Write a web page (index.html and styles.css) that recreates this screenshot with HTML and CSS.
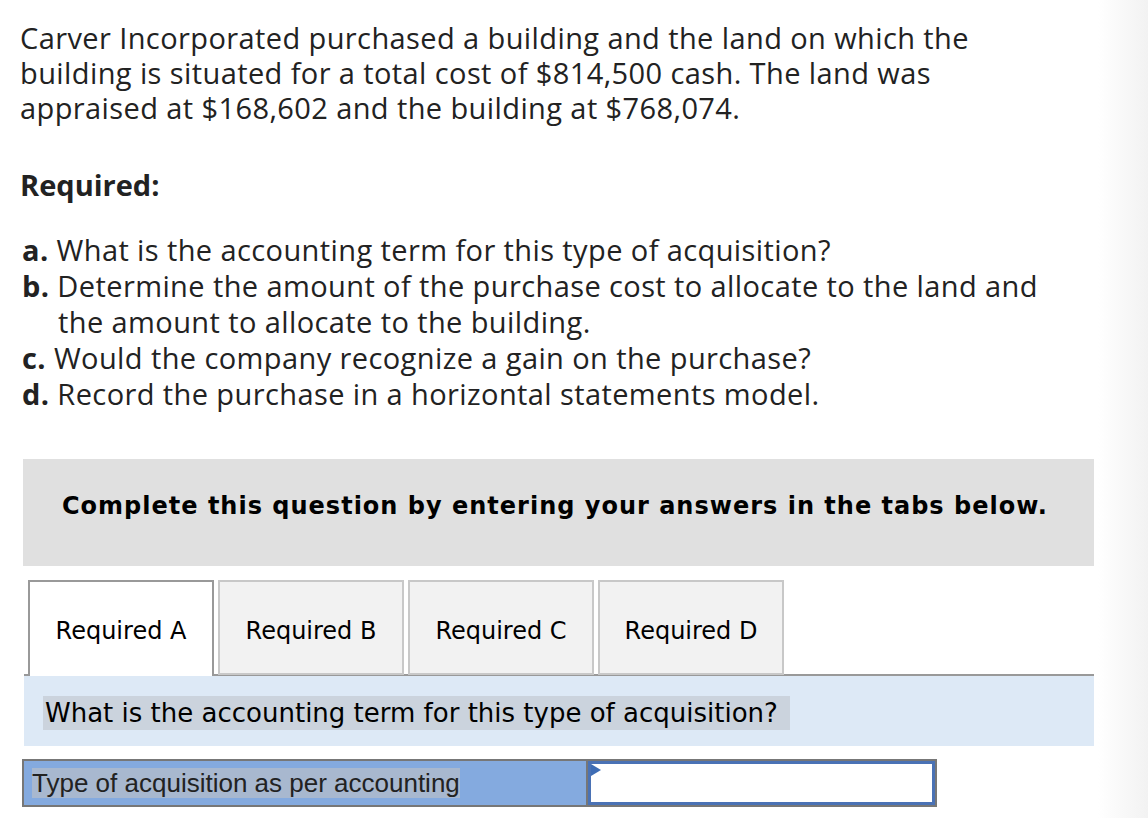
FILE: index.html
```html
<!DOCTYPE html>
<html lang="en">
<head>
  <meta charset="UTF-8">
  <title>Carver Incorporated - Basket Purchase</title>
  <link rel="stylesheet" href="styles.css">
</head>
<body>
  <div class="problem">
    <p class="intro">Carver Incorporated purchased a building and the land on which the building is situated for a total cost of $814,500 cash. The land was appraised at $168,602 and the building at $768,074.</p>
    <p class="req-title">Required:</p>
    <ul class="req-list">
      <li><b>a.</b> What is the accounting term for this type of acquisition?</li>
      <li><b>b.</b> Determine the amount of the purchase cost to allocate to the land and the amount to allocate to the building.</li>
      <li><b>c.</b> Would the company recognize a gain on the purchase?</li>
      <li><b>d.</b> Record the purchase in a horizontal statements model.</li>
    </ul>
  </div>

  <div class="instructions">Complete this question by entering your answers in the tabs below.</div>

  <div class="tabs">
    <button class="tab active">Required A</button>
    <button class="tab">Required B</button>
    <button class="tab">Required C</button>
    <button class="tab">Required D</button>
  </div>

  <div class="panel">
    <span class="question">What is the accounting term for this type of acquisition?</span>
  </div>

  <table class="answer">
    <tr>
      <td class="label"><span>Type of acquisition as per accounting</span></td>
      <td class="entry"><input type="text"></td>
    </tr>
  </table>
</body>
</html>
```

FILE: styles.css
```css
html {
  background: linear-gradient(to right, #fff 1098px, #f2f2f2 1148px);
}
body {
  margin: 0;
  padding: 20px 0 0 20px;
  width: 1074px;
  color: #222;
}
.problem {
  font-family: "Open Sans", sans-serif;
  font-size: 29px;
  letter-spacing: 0.4px;
}
.intro {
  margin: 0;
  line-height: 35px;
  width: 990px;
}
.req-title {
  font-weight: bold;
  margin: 42px 0 0;
  line-height: 35px;
  letter-spacing: 0;
}
.req-list {
  list-style: none;
  margin: 30px 0 0;
  padding: 0 0 0 38px;
  width: 1030px;
  line-height: 36px;
}
.req-list li {
  text-indent: -36px;
}
.instructions {
  margin: 47px 0 0 3px;
  background: #e0e0e0;
  height: 107px;
  box-sizing: border-box;
  padding: 33px 0 0 39px;
  font-family: "DejaVu Sans", Verdana, sans-serif;
  font-weight: bold;
  font-size: 24px;
  letter-spacing: 1px;
  color: #000;
}
.tabs {
  display: flex;
  gap: 4px;
  margin: 14px 0 0 4px;
  padding-left: 4px;
  border-bottom: 2px solid #999;
  height: 94px;
  align-items: flex-start;
}
.tab {
  width: 186px;
  height: 95px;
  box-sizing: border-box;
  background: #f2f2f2;
  border: 2px solid #c8c8c8;
  font-family: "DejaVu Sans", Verdana, sans-serif;
  font-size: 24px;
  color: #000;
  padding: 6px 0 0;
}
.tab.active {
  background: #fff;
  border-color: #999;
  border-bottom: none;
  height: 96px;
  padding-top: 4px;
}
.panel {
  margin-left: 4px;
  background: #dde9f6;
  height: 70px;
  box-sizing: border-box;
  padding: 22px 0 0 19px;
  font-family: "DejaVu Sans", Verdana, sans-serif;
  font-size: 26px;
  color: #000;
}
.question {
  background: #cbd3dd;
  padding: 2px 12px 2px 2px;
}
.answer {
  margin: 13px 0 0 2px;
  border-collapse: collapse;
  border: 2px solid #777;
}
.answer td {
  padding: 0;
  height: 44px;
}
.label {
  width: 554px;
  background: #84aadf;
  border-right: 2px solid #777;
  font-family: "Liberation Sans", Arial, sans-serif;
  font-size: 26px;
  color: #222;
  padding-left: 8px !important;
}
.label span {
  background: #a8b8cf;
}
.entry {
  width: 347px;
  position: relative;
}
.entry input {
  display: block;
  width: 100%;
  height: 44px;
  box-sizing: border-box;
  border: 3px solid #4a72b5;
  margin: 0;
}
.entry::before {
  content: "";
  position: absolute;
  top: 3px;
  left: 3px;
  border-left: 10px solid #3e6db5;
  border-top: 6px solid transparent;
  border-bottom: 6px solid transparent;
}
```
